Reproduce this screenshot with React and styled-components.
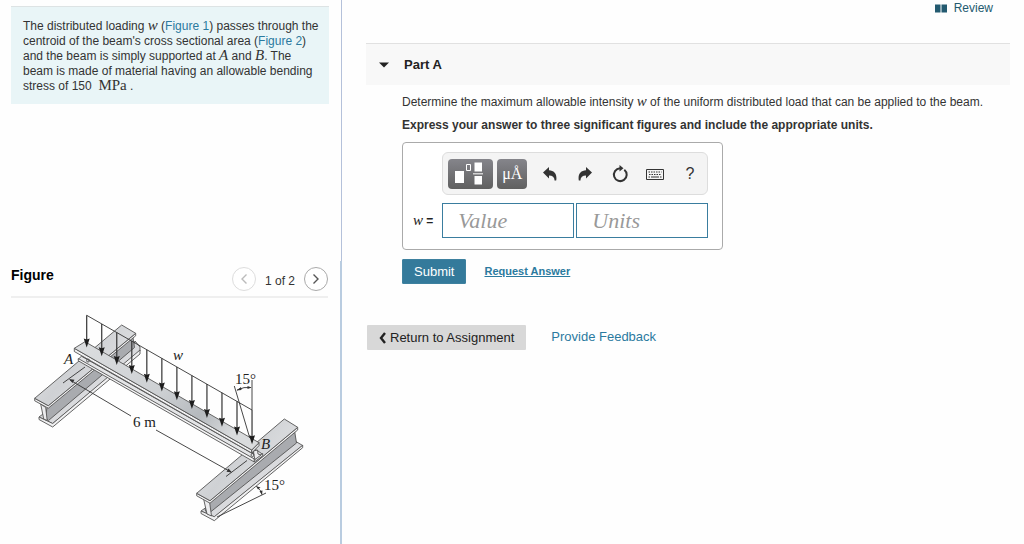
import { useState } from 'react';
import styled, { createGlobalStyle } from 'styled-components';

const GlobalStyle = createGlobalStyle`
  * { box-sizing: border-box; }
  body {
    margin: 0;
    background: #fefefe;
    color: #333;
    font: 12px/14px "Liberation Sans", Arial, sans-serif;
  }
  p, h2, h3 { margin: 0; }
  button, input { font-family: inherit; margin: 0; }
  a { color: #2b7a9f; text-decoration: none; }
`

const Page = styled.div`
  display: flex;
  min-height: 100vh;
`

/* left side */
const Side = styled.aside`
  flex: 0 0 342px;
  display: grid;
  grid-template-rows: minmax(48vh, auto) 1fr;
`

const Problem = styled.section`
  padding: 6px 12px 12px 11px;
  border-right: 1px solid #b4c1da;
`

const Intro = styled.p`
  padding: 12px 4px 10px 12px;
  background: #e9f5f7;
  border-top: 1px solid #dde3e4;
  line-height: 15px;
`

const Math = styled.i`
  font-family: "Liberation Serif", "Times New Roman", serif;
  font-size: 15px;
  font-weight: normal;
  line-height: 12px;
  font-style: ${props => props.$upright ? 'normal' : 'italic'};
`

const FigurePane = styled.section`
  padding: 6px 12px 12px 11px;
  border-right: 2px solid #b9cce0;
`

const FigureHead = styled.header`
  display: flex;
  align-items: center;
  padding-bottom: 5px;
  border-bottom: 2px solid #efefef;
`

const FigureTitle = styled.h2`
  flex: 1;
  padding-bottom: 8px;
  color: #000;
  font-size: 14px;
  line-height: 16px;
`

const Pager = styled.nav`
  display: flex;
  align-items: center;
  gap: 9px;
`

const PageCount = styled.span`
  padding-top: 3px;
`

const RoundButton = styled.button`
  display: grid;
  place-items: center;
  width: 24px;
  height: 24px;
  padding: 0;
  border: 1px solid ${props => props.disabled ? '#ddd' : '#aaa'};
  border-radius: 50%;
  background: #fff;
  color: ${props => props.disabled ? '#bbb' : '#555'};
`

const Drawing = styled.svg`
  display: block;
  width: 100%;
  margin-top: 4px;
  font-family: "Liberation Serif", "Times New Roman", serif;
`

/* right side */
const Main = styled.main`
  flex: 1;
  min-width: 0;
  padding: 0 14px 24px 24px;
`

const TopBar = styled.div`
  display: flex;
  justify-content: flex-end;
  padding: 1px 17px 27px 0;
`

const ReviewLink = styled.a`
  display: flex;
  align-items: center;
  gap: 7px;
  color: #235a70;
  font-size: 12px;
  line-height: 15px;
`

const PartHeader = styled.header`
  background: #f8f8f8;
  border-top: 1px solid #e1e1e1;
`

const PartToggle = styled.button`
  display: flex;
  align-items: center;
  gap: 15px;
  width: 100%;
  padding: 13px 13px 12px;
  border: 0;
  background: none;
  color: #222;
  font-size: 13px;
  font-weight: bold;
  line-height: 16px;
`

const PartBody = styled.div`
  padding: 10px 0 0 36px;
`

const Question = styled.p`
  line-height: 14px;
`

const Hint = styled.p`
  margin-top: 9px;
  font-size: 12px;
  font-weight: bold;
  line-height: 14px;
`

const AnswerBox = styled.div`
  display: inline-grid;
  grid-template-columns: auto auto;
  gap: 8px 9px;
  align-items: center;
  margin-top: 10px;
  padding: 9px 14px 11px 10px;
  border: 1px solid #aaa;
  border-radius: 4px;
  background: #fff;
`

const Toolbar = styled.div`
  grid-column: 2;
  display: flex;
  align-items: center;
  padding: 6px 0 5px 5px;
  border: 1px solid #ddd;
  border-radius: 6px;
  background: #f4f4f4;
`

const DarkButton = styled.button`
  display: grid;
  place-items: center;
  width: ${props => props.$wide ? 45 : 30}px;
  height: 30px;
  margin-right: ${props => props.$wide ? 4 : 5}px;
  padding: 0;
  border: 0;
  border-radius: 4px;
  background: linear-gradient(#85858b, #606060);
  color: #fff;
  font-family: "Liberation Serif", serif;
  font-size: 16px;
`

const ToolButton = styled.button`
  display: grid;
  place-items: center;
  width: 35px;
  height: 30px;
  padding: 0;
  border: 0;
  background: none;
  color: #333;
  font-size: 16px;
`

const WLabel = styled.label`
  color: #222;
  font-size: 12px;
  font-weight: bold;
`

const Fields = styled.div`
  display: flex;
  gap: 2px;
`

const Field = styled.input`
  width: 132px;
  height: 35px;
  padding: 0 15px;
  border: 1px solid #3a7d9f;
  border-radius: 0;
  background: #fff;
  color: #333;
  font: italic 22px "Liberation Serif", "Times New Roman", serif;
  &::placeholder { color: #999; opacity: 1; }
`

const Actions = styled.div`
  display: flex;
  align-items: center;
  gap: 18px;
  margin-top: 9px;
`

const Submit = styled.button`
  padding: 4px 11px;
  border: 1px solid #3e819f;
  border-radius: 1px;
  background: #347a9b;
  color: #fff;
  font-size: 13px;
  line-height: 15px;
`

const RequestLink = styled.a`
  padding-bottom: 2px;
  font-size: 11px;
  font-weight: bold;
  text-decoration: underline;
`

const Footer = styled.footer`
  display: flex;
  align-items: center;
  gap: 25px;
  margin: 41px 0 0 1px;
`

const ReturnButton = styled.button`
  display: flex;
  align-items: center;
  gap: 4px;
  padding: 5px 12px;
  border: 0;
  border-radius: 1px;
  background: #d8d8d8;
  color: #222;
  font-size: 13px;
  line-height: 15px;
`

const FeedbackLink = styled.a`
  padding-bottom: 2px;
  font-size: 13px;
`

function Chevron({ left }) {
  return (
    <svg width="8" height="12" viewBox="0 0 8 12" fill="none" stroke="currentColor" strokeWidth="1.4">
      <path d={left ? 'M6.5 1.5 2 6l4.5 4.5' : 'M1.5 1.5 6 6l-4.5 4.5'} />
    </svg>
  )
}

const ARROWS = 12

function BeamFigure() {
  let arrows = []
  for (let i = 0; i < ARROWS; i++) {
    arrows.push({ x: 86.7 + i * 15.03, top: 315.3 + i * 8.6, tip: 347.5 + i * 8.8 })
  }

  return (
    <Drawing viewBox="11 302 317 226" role="img" aria-label="Beam AB on two supports">
      <defs>
        <linearGradient id="flange" x1="0" y1="0" x2="1" y2="0.6">
          <stop offset="0" stopColor="#e9eaec" />
          <stop offset="0.5" stopColor="#cfd1d4" />
          <stop offset="1" stopColor="#e2e3e5" />
        </linearGradient>
        <linearGradient id="beam" x1="0" y1="0" x2="1" y2="0.6">
          <stop offset="0" stopColor="#dcdee0" />
          <stop offset="0.55" stopColor="#cdd0d3" />
          <stop offset="0.8" stopColor="#b5b9bd" />
          <stop offset="1" stopColor="#d9dbdd" />
        </linearGradient>
      </defs>

      <g stroke="#555" strokeWidth="0.9" strokeLinejoin="round">
        {/* support at A */}
        <path fill="#d9dadd" d="M39 417l4-3L133 346l2-5 5 6v4L52.7 423.5z" />
        <path fill="#f0f0f1" d="M39 417v2.5l13.7 7.5L140 354v-4L52.7 423.5z" />
        <path fill="#a9abaf" d="M47 407.5l85.5-73 2 13L48.5 420.5 45.5 418z" />
        <path fill="#ececee" d="M40.7 404l5 3.500 1.500 13-3.500-1.500z" />
        <path fill="#f0f0f1" d="M34.7 398.3v2.500l13.600 7.400 87.400-72.400v-2.500l-87.400 72.400z" />
        <path fill="url(#flange)" d="M34.7 398.3 121.7 325l14 8.3-87.4 72.400z" />

        {/* support at B */}
        <path fill="#d9dadd" d="M201 511l5-3.500L295 441l7.700 4.500-88.400 71.500z" />
        <path fill="#f0f0f1" d="M201 511v2.500l13.300 7.200 88.400-73v-2.500l-88.400 71.500z" />
        <path fill="#a9abaf" d="M208 501.500l86.500-71 2 12.500-88.500 71-3-4z" />
        <path fill="#ececee" d="M203.500 498.500l6 3 2 14.500-4.500-2z" />
        <path fill="#f0f0f1" d="M196.700 493.300v2.500l13.300 7.400 87.700-73.200v-2.700L210 500.700z" />
        <path fill="url(#flange)" d="M196.700 493.300 284.300 419l13.400 8.300L210 500.700z" />

        {/* beam AB */}
        <path fill="#e4e5e7" d="M78.3 359.3l4-4L258 451l4.700 3.300-8.400 5z" />
        <path fill="#f4f4f5" d="M78.3 358.5v2.300L254.300 462v-3z" />
        <path fill="#e4e5e7" d="M254.300 459v3l8.400-6.200v-2.300z" />
        <path fill="#55575a" d="M82 354.500v2L255 455l2-3z" />
        <path fill="#ececee" d="M253.500 451l4-1 .5 4 3 1-6 4.500-1-4z" />
        <path fill="#f1f1f2" d="M74.3 348.3v3.200l177.400 101.500v-3z" />
        <path fill="#dfe0e2" d="M251.700 450v3l7.300-7.300v-3z" />
        <path fill="url(#beam)" d="M74.3 348.3 85 341.700l174 101-7.300 7.300z" />
        <circle cx="88" cy="360.5" r="1.5" fill="none" />
        <circle cx="252.5" cy="455" r="1.5" fill="none" />
      </g>

      {/* distributed load */}
      <g stroke="#333" strokeWidth="0.9">
        <path d="M86.7 315.3 252 410" />
        {arrows.map(a => (
          <g key={a.x}>
            <path strokeWidth="1.2" d={`M${a.x} ${a.top}V${a.tip - 6}`} />
            <path fill="#1d1d1d" stroke="none" d={`M${a.x - 3} ${a.tip - 9}l3 1 3-1-3 9z`} />
          </g>
        ))}
      </g>

      {/* dimension and angles */}
      <g fill="none" stroke="#333" strokeWidth="0.9">
        <path d="M70 380 131 416M156 430l75 42M63 383l22-16M226 476.5l21-16" />
        <path d="M252 380v30M234.3 386l15.500 52" />
        <path d="M237 390q7-3.500 14-2.500M217 517l49-24M256.500 486.500q5 4 5.500 8" />
        <path fill="#333" stroke="none" d="M69 379l5.500.8-2 3.200zM232 472.500l-5.500-.8 2-3.200zM236.500 390.500l4.500-3.500.5 3zM251.500 387.500l-4-1.500v3zM256 486l4.500 1.500-2.500 2zM262 495l-2.500-4 3-.5z" />
      </g>

      <g fill="#222" fontSize="15">
        <text x="64" y="364" fontStyle="italic">A</text>
        <text x="173" y="360" fontStyle="italic">w</text>
        <text x="261" y="449" fontStyle="italic">B</text>
        <text x="133" y="427">6 m</text>
        <text x="235" y="384">15°</text>
        <text x="264" y="490">15°</text>
      </g>
    </Drawing>
  )
}

function AnswerForm() {
  let [value, setValue] = useState('')
  let [units, setUnits] = useState('')

  return (
    <AnswerBox>
      <Toolbar>
        <DarkButton $wide aria-label="Templates">
          <svg width="45" height="30" viewBox="0 0 45 30">
            <path fill="#fff" d="M7 12h9v12H7zM26.500 3.500H34v9h-7.500zM26.500 17H34v8.500h-7.500z" />
            <path fill="#d2d2d2" d="M25 14h10v1.500H25z" />
            <path fill="none" stroke="#fff" d="M18.500 5.500h4v6h-4z" />
          </svg>
        </DarkButton>
        <DarkButton aria-label="Symbols">μÅ</DarkButton>
        <ToolButton aria-label="Undo">
          <svg width="14" height="15" viewBox="0 0 14 15" fill="currentColor">
            <path d="M0 5.500 6 0v3.200c5.500.4 8.300 4 7.200 10.300h-1.700c.2-3.400-1.900-5-5.500-5.100v3.100z" />
          </svg>
        </ToolButton>
        <ToolButton aria-label="Redo">
          <svg width="14" height="15" viewBox="0 0 14 15" fill="currentColor">
            <path d="M14 5.500 8 0v3.200C2.500 3.600-.3 7.200.8 13.500h1.700c-.2-3.400 1.900-5 5.500-5.100v3.100z" />
          </svg>
        </ToolButton>
        <ToolButton aria-label="Reset">
          <svg width="16" height="18" viewBox="0 0 16 18" fill="none" stroke="currentColor" strokeWidth="2">
            <path d="M12.300 4.700A6.400 6.400 0 1 1 8 3.300" />
            <path fill="currentColor" stroke="none" d="M7.500 0v6.500L11.500 3.200z" />
          </svg>
        </ToolButton>
        <ToolButton aria-label="Keyboard shortcuts">
          <svg width="18" height="12" viewBox="0 0 18 12" fill="none" stroke="currentColor">
            <path d="M.5 1.500h17v10H.5z" />
            <path strokeDasharray="1.500 1" d="M2.500 4h13M3 6.500h12.500" />
            <path d="M2.500 9h1.500M5 9h8M14 9h1.500" />
          </svg>
        </ToolButton>
        <ToolButton aria-label="Help">?</ToolButton>
      </Toolbar>
      <WLabel htmlFor="w-value"><Math>w</Math> =</WLabel>
      <Fields>
        <Field id="w-value" placeholder="Value" value={value} onChange={e => setValue(e.target.value)} />
        <Field aria-label="Units" placeholder="Units" value={units} onChange={e => setUnits(e.target.value)} />
      </Fields>
    </AnswerBox>
  )
}

function App() {
  let [open, setOpen] = useState(true)

  return (
    <>
      <GlobalStyle />
      <Page>
        <Side>
          <Problem>
            <Intro>
              The distributed loading <Math>w</Math> (<a href="#fig1">Figure 1</a>) passes through the<br />
              centroid of the beam's cross sectional area (<a href="#fig2">Figure 2</a>)<br />
              and the beam is simply supported at <Math>A</Math> and <Math>B</Math>. The<br />
              beam is made of material having an allowable bending<br />
              stress of 150 &nbsp;<Math $upright>MPa</Math> .
            </Intro>
          </Problem>
          <FigurePane>
            <FigureHead>
              <FigureTitle>Figure</FigureTitle>
              <Pager>
                <RoundButton disabled aria-label="Previous figure"><Chevron left /></RoundButton>
                <PageCount>1 of 2</PageCount>
                <RoundButton aria-label="Next figure"><Chevron /></RoundButton>
              </Pager>
            </FigureHead>
            <BeamFigure />
          </FigurePane>
        </Side>

        <Main>
          <TopBar>
            <ReviewLink href="#review">
              <svg width="12" height="9" viewBox="0 0 12 9" fill="currentColor">
                <path d="M0 .5h5.500v8H0zM6.500.5H12v8H6.500z" />
              </svg>
              Review
            </ReviewLink>
          </TopBar>
          <PartHeader>
            <PartToggle aria-expanded={open} onClick={() => setOpen(!open)}>
              <svg width="10" height="6" viewBox="0 0 10 6" fill="currentColor">
                <path d="M0 .5h10l-5 5z" />
              </svg>
              Part A
            </PartToggle>
          </PartHeader>
          {
            open == true
            ? <PartBody>
                <Question>
                  Determine the maximum allowable intensity <Math>w</Math> of the uniform distributed load that can be applied to the beam.
                </Question>
                <Hint>Express your answer to three significant figures and include the appropriate units.</Hint>
                <AnswerForm />
                <Actions>
                  <Submit>Submit</Submit>
                  <RequestLink href="#answer">Request Answer</RequestLink>
                </Actions>
              </PartBody>
            : null
          }
          <Footer>
            <ReturnButton>
              <svg width="7" height="12" viewBox="0 0 7 12" fill="none" stroke="currentColor" strokeWidth="2.4">
                <path d="M6 1 2 6l4 5" />
              </svg>
              Return to Assignment
            </ReturnButton>
            <FeedbackLink href="#feedback">Provide Feedback</FeedbackLink>
          </Footer>
        </Main>
      </Page>
    </>
  )
}

export default App
